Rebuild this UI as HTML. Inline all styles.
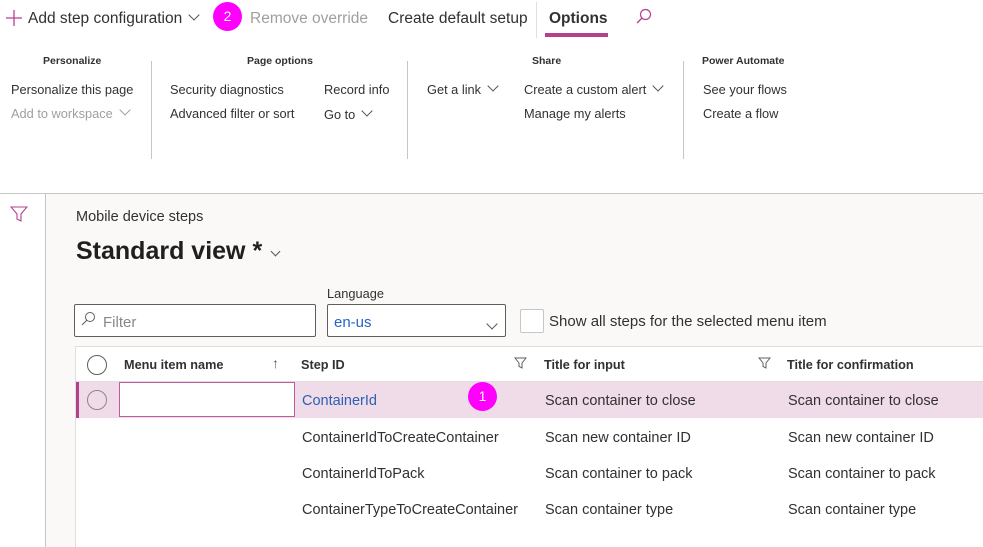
<!DOCTYPE html>
<html><head><style>
*{margin:0;padding:0;box-sizing:border-box}
body{width:983px;height:547px;overflow:hidden;background:#fff;font-family:"Liberation Sans",sans-serif;color:#323130;position:relative}
.a{position:absolute;white-space:nowrap}
.t{font-size:15.5px;top:10px}
.r{font-size:12.8px}
.h{font-size:10.5px;font-weight:bold;top:55px}
.g{font-size:14.5px}
.gh{font-size:12.7px;font-weight:bold;top:358px}
.sep{position:absolute;width:1px;background:#c8c6c4}
.chev{display:inline-block;width:8px;height:8px;border-right:1.2px solid #555;border-bottom:1.2px solid #555;transform:rotate(45deg);margin-left:8px;position:relative;top:-4px}
.circ{position:absolute;width:20px;height:20px;border:1px solid #605e5c;border-radius:50%}
.badge{position:absolute;width:29px;height:29px;border-radius:50%;background:#f0f;color:#fff;font-size:14px;text-align:center;line-height:29px}
</style></head><body>
<svg class="a" style="left:5px;top:9px" width="18" height="18"><path d="M9 1V17M1 9H17" stroke="#b4418e" stroke-width="1.3"/></svg>
<div class="a t" style="left:28px">Add step configuration<span class="chev"></span></div>
<div class="badge" style="left:213px;top:2px">2</div>
<div class="a t" style="left:250px;color:#a19f9d">Remove override</div>
<div class="a t" style="left:388px">Create default setup</div>
<div class="sep" style="left:536px;top:2px;height:36px;background:#e1dfdd"></div>
<div class="a t" style="left:549px;font-weight:bold">Options</div>
<div class="a" style="left:545px;top:33px;width:63px;height:4px;background:#b4418e"></div>
<svg class="a" style="left:635px;top:8px" width="18" height="18"><circle cx="10.5" cy="6.5" r="5" fill="none" stroke="#b4418e" stroke-width="1.2"/><path d="M7 10L2 15" stroke="#b4418e" stroke-width="1.3"/></svg>
<div class="a h" style="left:43px">Personalize</div>
<div class="a r" style="left:11px;top:82px">Personalize this page</div>
<div class="a r" style="left:11px;top:106px;color:#a19f9d">Add to workspace<span class="chev" style="border-color:#a19f9d"></span></div>
<div class="sep" style="left:151px;top:61px;height:98px"></div>
<div class="a h" style="left:247px">Page options</div>
<div class="a r" style="left:170px;top:82px">Security diagnostics</div>
<div class="a r" style="left:170px;top:106px">Advanced filter or sort</div>
<div class="a r" style="left:324px;top:82px">Record info</div>
<div class="a r" style="left:324px;top:107px">Go to<span class="chev"></span></div>
<div class="sep" style="left:407px;top:61px;height:98px"></div>
<div class="a h" style="left:532px">Share</div>
<div class="a r" style="left:427px;top:82px">Get a link<span class="chev"></span></div>
<div class="a r" style="left:524px;top:82px">Create a custom alert<span class="chev"></span></div>
<div class="a r" style="left:524px;top:106px">Manage my alerts</div>
<div class="sep" style="left:683px;top:61px;height:98px"></div>
<div class="a h" style="left:702px">Power Automate</div>
<div class="a r" style="left:703px;top:82px">See your flows</div>
<div class="a r" style="left:703px;top:106px">Create a flow</div>
<div class="a" style="left:0;top:193px;width:983px;height:354px;background:#faf9f8;border-top:1px solid #c8c6c4"></div>
<div class="a" style="left:0;top:194px;width:46px;height:353px;background:#fff;border-right:1px solid #c8c6c4"></div>
<svg class="a" style="left:10px;top:206px" width="18" height="16"><path d="M1 1H17L11 8V15L7 13V8Z" fill="none" stroke="#b4418e" stroke-width="1.1"/></svg>
<div class="a" style="left:76px;top:209px;font-size:14.5px">Mobile device steps</div>
<div class="a" style="left:76px;top:237px;font-size:25px;font-weight:bold;color:#201f1e">Standard view *<span class="chev" style="width:7px;height:7px;margin-left:10px"></span></div>
<div class="a" style="left:327px;top:286px;font-size:12.8px">Language</div>
<div class="a" style="left:74px;top:304px;width:242px;height:33px;background:#fff;border:1px solid #605e5c;border-radius:2px"></div>
<svg class="a" style="left:80px;top:311px" width="16" height="16"><circle cx="10" cy="6" r="4.5" fill="none" stroke="#605e5c"/><path d="M7 9L2 14" stroke="#605e5c"/></svg>
<div class="a" style="left:103px;top:314px;font-size:15px;color:#8a8886">Filter</div>
<div class="a" style="left:327px;top:304px;width:179px;height:33px;background:#fff;border:1px solid #605e5c;border-radius:2px"></div>
<div class="a" style="left:334px;top:314px;font-size:15px;color:#2563c5">en-us</div>
<span class="a chev" style="left:480px;top:315px"></span>
<div class="a" style="left:520px;top:309px;width:24px;height:24px;background:#fff;border:1px solid #c8c6c4;border-radius:2px"></div>
<div class="a" style="left:549px;top:313px;font-size:15px">Show all steps for the selected menu item</div>
<div class="a" style="left:75px;top:346px;width:908px;height:201px;background:#fff;border-left:1px solid #e1dfdd;border-top:1px solid #e1dfdd"></div>
<div class="a" style="left:76px;top:381px;width:907px;height:1px;background:#e1dfdd"></div>
<div class="circ" style="left:87px;top:355px"></div>
<div class="a gh" style="left:124px">Menu item name</div>
<div class="a" style="left:272px;top:355px;font-size:14px;color:#605e5c">↑</div>
<div class="a gh" style="left:301px">Step ID</div>
<svg class="a" style="left:514px;top:357px" width="13" height="12"><path d="M1 1H12L8 6V11L5 9.5V6Z" fill="none" stroke="#605e5c"/></svg>
<div class="a gh" style="left:544px">Title for input</div>
<svg class="a" style="left:758px;top:357px" width="13" height="12"><path d="M1 1H12L8 6V11L5 9.5V6Z" fill="none" stroke="#605e5c"/></svg>
<div class="a gh" style="left:787px">Title for confirmation</div>
<div class="a" style="left:76px;top:382px;width:907px;height:36px;background:#f0dce8"></div>
<div class="a" style="left:76px;top:382px;width:3px;height:36px;background:#b4418e"></div>
<div class="circ" style="left:87px;top:390px;border-color:#8a8886"></div>
<div class="a" style="left:119px;top:382px;width:176px;height:35px;background:#fff;border:1px solid #c05aa0"></div>
<div class="a g" style="left:302px;top:393px;color:#2b5fb4">ContainerId</div>
<div class="badge" style="left:468px;top:382px">1</div>
<div class="a g" style="left:545px;top:393px">Scan container to close</div>
<div class="a g" style="left:788px;top:393px">Scan container to close</div>
<div class="a g" style="left:302px;top:430px">ContainerIdToCreateContainer</div>
<div class="a g" style="left:545px;top:430px">Scan new container ID</div>
<div class="a g" style="left:788px;top:430px">Scan new container ID</div>
<div class="a g" style="left:302px;top:466px">ContainerIdToPack</div>
<div class="a g" style="left:545px;top:466px">Scan container to pack</div>
<div class="a g" style="left:788px;top:466px">Scan container to pack</div>
<div class="a g" style="left:302px;top:502px">ContainerTypeToCreateContainer</div>
<div class="a g" style="left:545px;top:502px">Scan container type</div>
<div class="a g" style="left:788px;top:502px">Scan container type</div>
</body></html>
